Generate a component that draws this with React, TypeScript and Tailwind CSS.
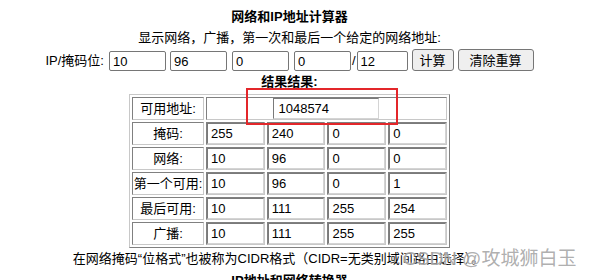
export default function App() {
  const rows: { label: string; values: string[] }[] = [
    { label: "掩码:", values: ["255", "240", "0", "0"] },
    { label: "网络:", values: ["10", "96", "0", "0"] },
    { label: "第一个可用:", values: ["10", "96", "0", "1"] },
    { label: "最后可用:", values: ["10", "111", "255", "254"] },
    { label: "广播:", values: ["10", "111", "255", "255"] },
  ];

  const inputCls =
    "h-[20px] rounded-[2px] border border-[#767676] bg-white px-[3px] text-[13px] text-black outline-none";
  const btnCls =
    "h-[22px] rounded-[3px] border border-[#767676] bg-[#efefef] px-[6px] text-[13px] leading-none text-black";
  const cellCls = "border border-t-[#808080] border-l-[#808080] border-b-[#c8c8c8] border-r-[#c8c8c8] p-0";
  const cellInputCls =
    "block h-[21px] w-full border border-t-[#7a7a7a] border-l-[#7a7a7a] border-b-[#d4d4d4] border-r-[#d4d4d4] bg-white px-[3px] text-[13px] text-black outline-none";

  return (
    <div className="relative h-[280px] w-[594px] overflow-hidden bg-white font-['Liberation_Sans','Noto_Sans_CJK_SC',sans-serif] text-[13px] text-black">
      <div className="flex w-[579px] flex-col items-center pt-[9px] text-center">
        <h1 className="text-[13px] font-bold leading-[16px]">网络和IP地址计算器</h1>
        <p className="mt-[5px] leading-[16px]">显示网络，广播，第一次和最后一个给定的网络地址:</p>

        <div className="mt-[3px] flex items-end">
          <span className="mb-[2px] mr-[5px] leading-[16px]">IP/掩码位:</span>
          <input className={`${inputCls} w-[57px]`} defaultValue="10" />
          <input className={`${inputCls} ml-[4px] w-[57px]`} defaultValue="96" />
          <input className={`${inputCls} ml-[5px] w-[57px]`} defaultValue="0" />
          <input className={`${inputCls} ml-[5px] w-[57px]`} defaultValue="0" />
          <span className="mx-[1px] mb-[2px] leading-[16px]">/</span>
          <input className={`${inputCls} w-[51px]`} defaultValue="12" />
          <button className={`${btnCls} ml-[4px] w-[42px]`}>计算</button>
          <button className={`${btnCls} ml-[4px] w-[76px]`}>清除重算</button>
        </div>

        <p className="mt-[3px] font-bold leading-[16px]">结果结果:</p>

        <table className="mt-[4px] w-[321px] border-separate border-spacing-[2px] border border-t-[#c8c8c8] border-l-[#c8c8c8] border-b-[#808080] border-r-[#808080]">
          <tbody>
            <tr className="h-[23px]">
              <td className={`${cellCls} w-[72px] whitespace-nowrap text-center`}>可用地址:</td>
              <td className={cellCls} colSpan={4}>
                <div className="flex justify-center">
                  <input
                    className="h-[21px] w-[106px] border border-t-[#7a7a7a] border-l-[#7a7a7a] border-b-[#d4d4d4] border-r-[#d4d4d4] bg-white px-[4px] text-[13px] text-black outline-none"
                    defaultValue="1048574"
                  />
                </div>
              </td>
            </tr>
            {rows.map((r) => (
              <tr key={r.label} className="h-[23px]">
                <td className={`${cellCls} whitespace-nowrap text-center`}>{r.label}</td>
                {r.values.map((v, i) => (
                  <td key={i} className={`${cellCls} w-[60px]`}>
                    <input className={cellInputCls} defaultValue={v} />
                  </td>
                ))}
              </tr>
            ))}
          </tbody>
        </table>

        <p className="mt-[3px] whitespace-nowrap pr-[22px] leading-[16px]">
          在网络掩码“位格式”也被称为CIDR格式（CIDR=无类别域间路由选择）。
        </p>
        <p className="mt-[6px] font-bold leading-[16px]">IP地址和网络转换器</p>
      </div>

      {/* annotation box */}
      <div className="absolute left-[246px] top-[88px] h-[37px] w-[152px] border-2 border-[#e3262a]" />

      {/* watermark */}
      <span className="absolute left-[403px] top-[248px] text-[19px] leading-[22px] text-[#9a9a9a]/80 [text-shadow:0_0_2px_#fff]">
        CSDN @攻城狮白玉
      </span>
    </div>
  );
}
